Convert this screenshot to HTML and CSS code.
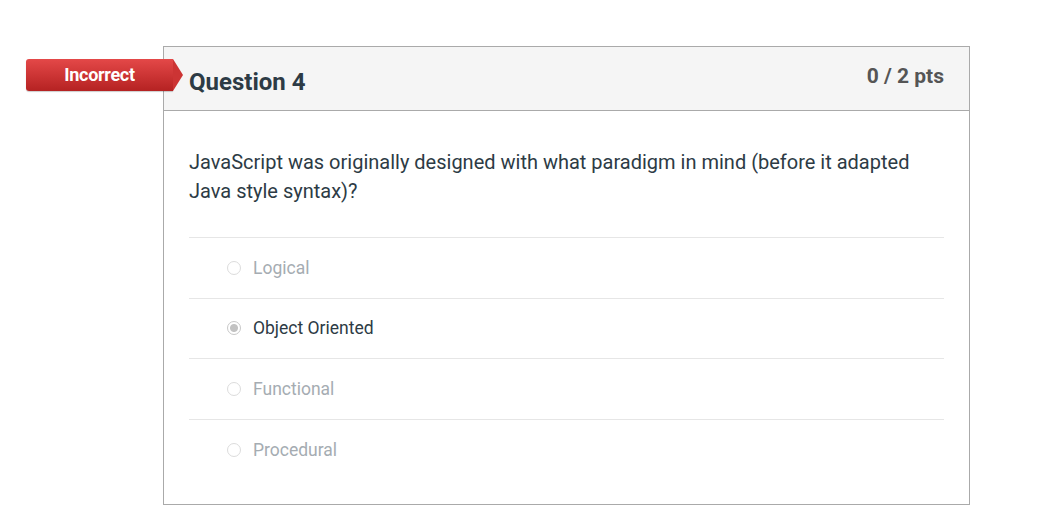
FILE: index.html
```html
<!DOCTYPE html>
<html lang="en">
  <head>
    <meta charset="UTF-8" />
    <meta name="viewport" content="width=device-width, initial-scale=1.0" />
    <title>Quiz Results</title>
    <link rel="stylesheet" href="styles.css">
  </head>
  <body>
    <div class="page">
      <div class="question">
        <div class="result-flag">Incorrect</div>
        <div class="question-header">
          <h2>Question 4</h2>
          <div class="points">0 / 2 pts</div>
        </div>
        <div class="question-body">
          <p class="question-text">JavaScript was originally designed with what paradigm in mind (before it adapted Java style syntax)?</p>
          <div class="answers">
            <label class="answer">
              <span class="radio"></span>
              <span>Logical</span>
            </label>
            <label class="answer selected">
              <span class="radio"></span>
              <span>Object Oriented</span>
            </label>
            <label class="answer">
              <span class="radio"></span>
              <span>Functional</span>
            </label>
            <label class="answer">
              <span class="radio"></span>
              <span>Procedural</span>
            </label>
          </div>
        </div>
      </div>
    </div>
  </body>
</html>
```

FILE: styles.css
```css
body {
  font-family: Roboto, "Liberation Sans", Arial, sans-serif;
  margin: 0;
  background: #fff;
  color: #2d3b45;
}
.page {
  padding: 46px 0 0 163px;
}
.question {
  position: relative;
  width: 805px;
  border: 1px solid #aaa;
}
.result-flag {
  position: absolute;
  left: -138px;
  top: 12px;
  width: 147px;
  height: 32px;
  line-height: 31px;
  box-sizing: border-box;
  text-align: center;
  color: #fff;
  font-weight: bold;
  font-size: 18px;
  letter-spacing: -0.3px;
  background: linear-gradient(#e44848, #b52222);
  border-radius: 3px 0 0 3px;
  box-shadow: 0 1px 1px rgba(0, 0, 0, 0.2);
}
.result-flag::after {
  content: "";
  position: absolute;
  right: -10px;
  top: 0;
  width: 0;
  height: 0;
  border-top: 16px solid transparent;
  border-bottom: 16px solid transparent;
  border-left: 10px solid #cc3434;
}
.question-header {
  display: flex;
  justify-content: space-between;
  height: 63px;
  padding: 0 25px;
  background: #f5f5f5;
  border-bottom: 1px solid #aaa;
}
.question-header h2 {
  margin: 0;
  padding-top: 21px;
  font-size: 24px;
  font-weight: bold;
  color: #2d3b45;
}
.points {
  padding-top: 17px;
  font-size: 21px;
  font-weight: bold;
  color: #555;
}
.question-body {
  padding: 37px 25px 24px;
}
.question-text {
  margin: 0 0 31px;
  font-size: 20px;
  line-height: 29px;
}
.answer {
  display: flex;
  align-items: center;
  gap: 12px;
  padding: 20px 0 20px 38px;
  line-height: 20px;
  font-size: 17.5px;
  color: #a5acb2;
  border-top: 1px solid #e6e6e6;
}
.answer.selected {
  padding-top: 19px;
  color: #2d3b45;
}
.radio {
  width: 12px;
  height: 12px;
  border-radius: 50%;
  border: 1px solid #dcdcdc;
  background: #fff;
  box-sizing: content-box;
}
.answer.selected .radio {
  border-color: #c8c8c8;
  background: radial-gradient(circle, #c2c2c2 0, #c2c2c2 3.5px, #fff 4.5px);
}
```
